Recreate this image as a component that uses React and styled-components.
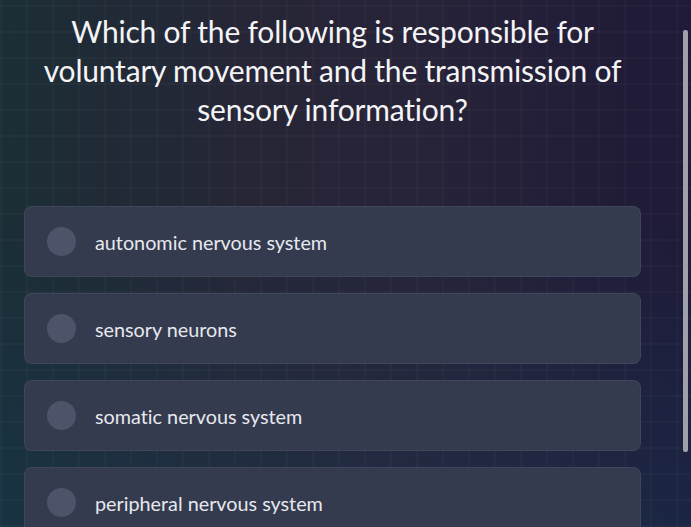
import React from 'react';
import styled, { createGlobalStyle } from 'styled-components';

const GlobalStyle = createGlobalStyle`
  html, body {
    margin: 0;
    padding: 0;
    height: 100%;
    overflow: hidden;
  }
  body {
    font-family: Lato, "Liberation Sans", sans-serif;
    font-variant-ligatures: none;
  }
`;

const Page = styled.div`
  position: relative;
  width: 691px;
  height: 527px;
  overflow: hidden;
  background-color: #211f33;
  background-image:
    repeating-linear-gradient(90deg, rgba(255, 255, 255, 0.025) 0 2px, transparent 2px 26px),
    repeating-linear-gradient(0deg, rgba(255, 255, 255, 0.025) 0 2px, transparent 2px 26px),
    linear-gradient(180deg, rgba(0, 0, 0, 0) 40%, rgba(20, 60, 90, 0.35) 100%),
    linear-gradient(90deg, #1b2e36 0%, #262636 35%, #272338 60%, #1e1a38 100%);
`;

const Column = styled.div`
  width: 617px;
  margin-left: 24px;
  padding-top: 12px;
  display: flex;
  flex-direction: column;
`;

const Question = styled.h1`
  margin: 0 0 77px;
  font-family: Lato, "Liberation Sans", sans-serif;
  font-weight: 400;
  font-size: 30px;
  line-height: 39px;
  color: #f4f4f6;
  text-align: center;
  letter-spacing: -0.2px;
`;

const Options = styled.div`
  display: flex;
  flex-direction: column;
  gap: 16px;
`;

const Option = styled.div`
  height: 71px;
  box-sizing: border-box;
  display: flex;
  align-items: center;
  padding-left: 22px;
  gap: 19px;
  border-radius: 8px;
  background: #353b4f;
  border: 1px solid rgba(255, 255, 255, 0.06);
`;

const Radio = styled.span`
  width: 29px;
  height: 29px;
  border-radius: 50%;
  background: #4b5468;
  flex-shrink: 0;
`;

const Label = styled.span`
  font-size: 19.8px;
  color: #e6e8ee;
`;

const ScrollThumb = styled.div`
  position: absolute;
  right: 3px;
  top: 30px;
  width: 5px;
  height: 422px;
  border-radius: 2px;
  background: #9fa0aa;
`;

const answers = [
  'autonomic nervous system',
  'sensory neurons',
  'somatic nervous system',
  'peripheral nervous system',
];

export default function App() {
  return (
    <Page>
      <GlobalStyle />
      <Column>
        <Question>
          Which of the following is responsible for voluntary movement and the transmission of sensory information?
        </Question>
        <Options>
          {answers.map((a) => (
            <Option key={a}>
              <Radio />
              <Label>{a}</Label>
            </Option>
          ))}
        </Options>
      </Column>
      <ScrollThumb />
    </Page>
  );
}
